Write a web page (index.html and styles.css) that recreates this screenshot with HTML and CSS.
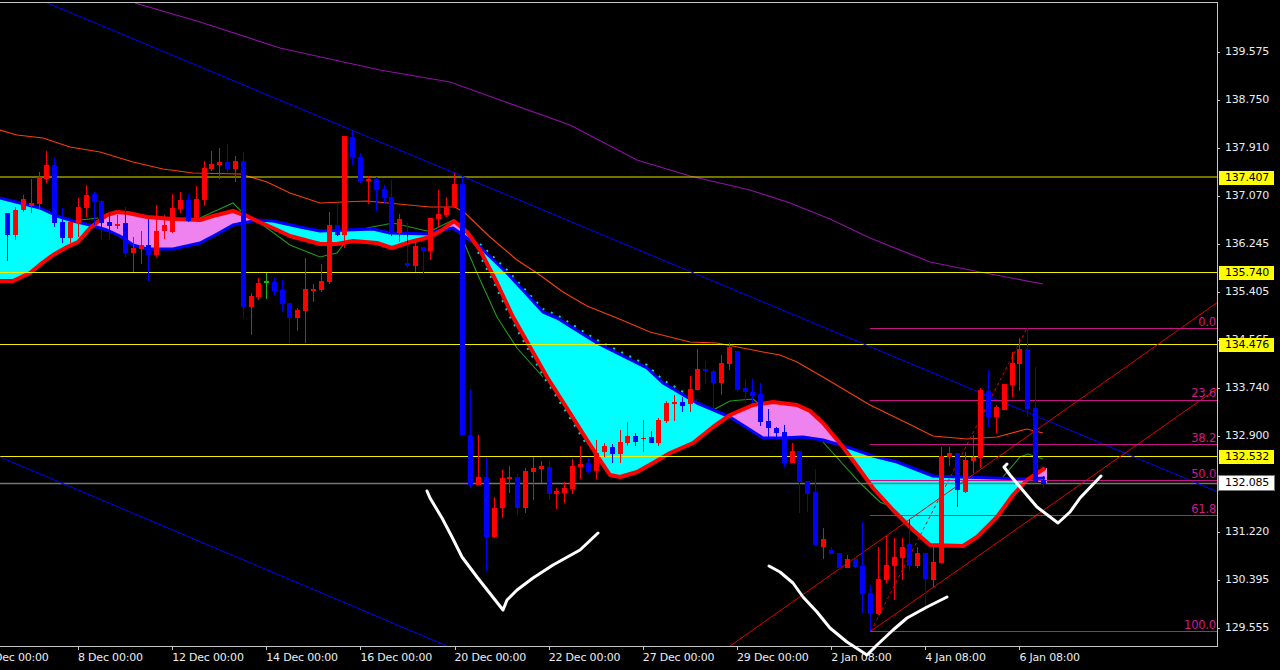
FILE: index.html
```html
<!DOCTYPE html>
<html lang="en">
<head>
<meta charset="utf-8">
<title>Chart</title>
<link rel="stylesheet" href="styles.css">
</head>
<body>
<main class="terminal">
  <div class="plot">
    <svg class="plot-svg" viewBox="0 3 1217 643" width="1217" height="643" aria-label="Candlestick chart">
      <defs>
        <path id="cloud" fill-rule="evenodd" d="M0 281L13 281L30 273L42 263L53 255L67 247L78 242L90 228L100 220L107 215L117 212L128 213L147 217L173 219L200 220L213 216L233 211L247 216L257 221L273 228L290 236L320 244L337 244L353 241L377 243L392 248L410 242L430 237L442 230L454 221L467 232L480 250L497 283L513 317L530 347L547 377L570 413L587 440L600 460L610 475L620 477L637 472L653 463L670 453L693 443L713 427L730 415L753 405L773 402L797 405L810 411L823 423L843 447L860 470L873 488L893 510L913 530L930 545L963 546L977 537L997 517L1013 495L1027 480L1047 468L1047 483L1036 481L1027 479L960 477L933 476L897 462L873 456L847 447L823 440L803 437L780 438L763 438L730 417L697 403L663 383L647 368L597 343L557 318L543 312L507 273L480 247L467 238L453 228L433 232L430 234L390 233L373 229L347 230L320 231L300 227L273 221L257 220L233 225L217 234L200 243L173 249L147 249L133 245L120 236L107 230L90 225L73 221L57 216L40 208L20 203L0 198Z"/>
        <clipPath id="pink-zones">
          <rect x="92" y="0" width="158" height="646"/>
          <rect x="438" y="0" width="24" height="646"/>
          <rect x="730" y="0" width="115" height="646"/>
          <rect x="1029" y="0" width="20" height="646"/>
        </clipPath>
      </defs>

      <path class="ma-green" d="M80 220L98 218M200 218L213 212L233 203L240 210L267 228L290 245L320 257L337 253L343 245L367 228L393 223L427 231L433 230L453 220L463 240L477 273L497 317L517 348L543 377M713 410L730 401L753 399L763 407M823 442L860 483L880 502L887 505M1003 477L1020 457L1028 454L1043 459"/>
      <use href="#cloud" class="cloud-cyan"/>
      <use href="#cloud" class="cloud-pink" clip-path="url(#pink-zones)"/>
      <path class="edge-dots" d="M480 244L507 270L543 309L557 315L597 340L647 365L663 380L697 400"/>
      <path class="edge-dots" d="M478 252L495 285L511 319L528 349L545 379L568 415L585 442"/>
      <path class="ma-orange" d="M0 130L17 135L43 138L70 147L100 152L133 162L163 169L193 173L240 174L267 182L290 193L320 203L367 201L430 207L455 207L465 213L490 237L517 260L537 273L563 292L587 306L617 318L650 332L690 342L717 343L763 352L780 355L797 362L823 377L870 405L907 423L933 436L967 439L997 437L1027 429L1043 433"/>
      <path class="ma-purple" d="M135 3L200 22L280 48L380 70L450 82L500 100L570 125L637 160L690 176L750 190L790 203L830 219L870 238L930 262L980 272L1043 284"/>
      <path class="band-blue" d="M0 198L20 203L40 208L57 216L73 221L90 225L107 230L120 236L133 245L147 249L173 249L200 243L217 234L233 225L257 220L273 221L300 227L320 231L347 230L373 229L390 233L430 234L433 232L453 228L467 238L480 247L507 273L543 312L557 318L597 343L647 368L663 383L697 403L730 417L763 438L780 438L803 437L823 440L847 447L873 456L897 462L933 476L960 477L1027 479L1045 478"/>
      <path class="band-red" d="M0 281L13 281L30 273L42 263L53 255L67 247L78 242L90 228L100 220L107 215L117 212L128 213L147 217L173 219L200 220L213 216L233 211L247 216L257 221L273 228L290 236L320 244L337 244L353 241L377 243L392 248L410 242L430 237L442 230L454 221L467 232L480 250L497 283L513 317L530 347L547 377L570 413L587 440L600 460L610 475L620 477L637 472L653 463L670 453L693 443L713 427L730 415L753 405L773 402L797 405L810 411L823 423L843 447L860 470L873 488L893 510L913 530L930 545L963 546L977 537L997 517L1013 495L1027 480L1045 468"/>

      <path class="level-soft" d="M0 177H1217"/>
      <path class="level" d="M0 272.5H1217M0 344.5H1217M0 456.5H1217"/>
      <path class="bid" d="M0 483.5H1217"/>
      <path class="channel-blue" d="M45 2L1218 492M0 457L447 646"/>
      <path class="channel-red" d="M730 646L1218 302M871 631L1218 388"/>
      <path class="fib-trend" d="M871 631L1027 328"/>
      <path class="fib" d="M870 328.5H1217M870 400.5H1217M870 444.5H1217M870 480.5H1217M870 515.5H1217M870 631.5H1217"/>
      <text class="fib-label" x="1216" y="326">0.0</text>
      <text class="fib-label" x="1216" y="397">23.6</text>
      <text class="fib-label" x="1216" y="442">38.2</text>
      <text class="fib-label" x="1216" y="478">50.0</text>
      <text class="fib-label" x="1216" y="513">61.8</text>
      <text class="fib-label" x="1216" y="629">100.0</text>

      <path class="wick-blue" d="M7.5 213V261M54.5 158V227M62.5 208V243M94.5 192V225M101.5 200V240M109.5 213V240M125.5 207V257M148.5 219V281M188.5 194V222M227.5 144V172M243.5 152V318M274.5 278V295M282.5 280V312M289.5 303V343M337.5 204V236M352.5 131V165M360.5 153V183M376.5 177V211M384.5 185V203M391.5 180V236M407.5 223V268M423.5 247V273M462.5 177V435M470.5 390V488M486.5 457V571M517.5 474V515M549.5 461V500M588.5 458V473M612.5 444V463M635.5 433V446M651.5 431V443M682.5 397V412M705.5 361V384M713.5 369V408M737.5 351V392M745.5 379V403M752.5 379V403M760.5 383V426M768.5 409V437M776.5 427V437M784.5 425V467M799.5 451V513M807.5 481V512M815.5 469V545M831.5 547V554M839.5 553V568M855.5 557V568M862.5 522V614M870.5 585V631M909.5 519V570M925.5 553V608M957.5 453V507M988.5 370V427M1027.5 328V417M1035.5 367V483M1043.5 476V488"/>
      <path class="body-blue" d="M7.5 213V235M54.5 165V223M62.5 222V238M94.5 194V202M101.5 201V223M109.5 222V226M125.5 223V253M148.5 245V255M188.5 200V221M227.5 162V169M243.5 161V307M274.5 282V291M282.5 290V304M289.5 303V318M337.5 225V235M352.5 137V158M360.5 157V181M376.5 179V190M384.5 189V198M391.5 197V234M407.5 263V266M423.5 247V251M462.5 184V435M470.5 435V485M486.5 477V537M517.5 477V508M549.5 467V494M588.5 463V472M612.5 447V454M635.5 436V442M651.5 437V443M682.5 402V406M705.5 369V371M713.5 371V383M737.5 351V390M745.5 388V392M752.5 392V396M760.5 394V422M768.5 421V428M776.5 428V433M784.5 432V463M799.5 451V482M807.5 481V494M815.5 492V545M831.5 550V554M839.5 553V568M855.5 559V567M862.5 566V594M870.5 593V614M909.5 544V566M925.5 553V579M957.5 453V490M988.5 391V417M1027.5 349V409M1035.5 408V482M1043.5 480V484"/>
      <path class="wick-red" d="M15.5 207V240M23.5 195V212M31.5 179V213M39.5 172V209M46.5 151V183M70.5 222V243M78.5 198V237M86.5 185V217M117.5 215V229M133.5 237V272M141.5 231V264M156.5 205V257M164.5 215V239M172.5 194V233M180.5 192V213M196.5 186V220M204.5 161V206M211.5 151V171M219.5 148V179M235.5 156V182M251.5 293V335M258.5 278V300M297.5 308V331M305.5 258V343M313.5 284V302M321.5 264V292M329.5 212V284M344.5 136V248M368.5 176V204M399.5 214V242M415.5 240V272M430.5 218V260M438.5 190V228M446.5 197V217M454.5 173V208M478.5 435V485M494.5 497V538M502.5 470V518M509.5 466V493M525.5 468V513M533.5 457V500M541.5 461V483M556.5 488V509M564.5 482V503M572.5 459V494M580.5 446V479M596.5 440V479M604.5 443V457M620.5 430V463M627.5 422V446M643.5 420V452M658.5 418V446M666.5 401V423M674.5 395V421M690.5 376V412M697.5 349V390M721.5 355V395M729.5 343V370M792.5 443V463M823.5 528V559M847.5 555V568M878.5 547V615M886.5 535V583M894.5 538V600M902.5 538V580M917.5 547V568M933.5 547V587M941.5 447V563M949.5 447V466M965.5 452V493M973.5 435V473M980.5 388V468M996.5 405V433M1004.5 384V410M1012.5 352V397M1019.5 338V391"/>
      <path class="body-red" d="M15.5 210V235M23.5 199V210M31.5 203V206M39.5 177V204M46.5 165V179M70.5 222V238M78.5 207V223M86.5 195V208M117.5 224V226M133.5 248V253M141.5 245V249M156.5 231V255M164.5 225V231M172.5 208V232M180.5 200V209M196.5 199V220M204.5 168V200M211.5 164V169M219.5 162V165M235.5 161V169M251.5 296V307M258.5 283V297M297.5 310V318M305.5 289V311M313.5 289V291M321.5 281V290M329.5 225V282M344.5 136V235M368.5 179V181M399.5 219V233M415.5 246V266M430.5 218V251M438.5 214V219M446.5 207V215M454.5 184V207M478.5 477V485M494.5 508V537M502.5 478V508M509.5 477V479M525.5 471V508M533.5 468V472M541.5 466V469M556.5 491V494M564.5 488V493M572.5 466V489M580.5 464V467M596.5 453V471M604.5 446V452M620.5 442V454M627.5 436V443M643.5 438V439M658.5 420V443M666.5 403V421M674.5 402V404M690.5 389V404M697.5 369V390M721.5 363V383M729.5 347V364M792.5 451V463M823.5 539V547M847.5 559V568M878.5 579V614M886.5 565V580M894.5 557V566M902.5 547V558M917.5 553V566M933.5 562V580M941.5 456V563M949.5 453V457M965.5 460V492M973.5 457V461M980.5 390V458M996.5 407V417M1004.5 384V410M1012.5 363V385M1019.5 349V364"/>
      <path class="wick-green" d="M266.5 273V299"/>
      <path class="body-green" d="M266.5 281V283"/>
    </svg>
  </div>

  <aside class="price-scale">
    <div class="price-tick">139.575</div>
    <div class="price-tick">138.750</div>
    <div class="price-tick">137.910</div>
    <div class="price-tick">137.070</div>
    <div class="price-tick">136.245</div>
    <div class="price-tick">135.405</div>
    <div class="price-tick">134.565</div>
    <div class="price-tick">133.740</div>
    <div class="price-tick">132.900</div>
    <div class="price-tick">132.060</div>
    <div class="price-tick">131.220</div>
    <div class="price-tick">130.395</div>
    <div class="price-tick">129.555</div>
    <span class="badge badge-a">137.407</span>
    <span class="badge badge-b">135.740</span>
    <span class="badge badge-c">134.476</span>
    <span class="badge badge-d">132.532</span>
    <span class="badge badge-bid">132.085</span>
  </aside>

  <footer class="time-scale">
    <span class="time-tick time-first">6 Dec 00:00</span>
    <span class="time-tick">8 Dec 00:00</span>
    <span class="time-tick">12 Dec 00:00</span>
    <span class="time-tick">14 Dec 00:00</span>
    <span class="time-tick">16 Dec 00:00</span>
    <span class="time-tick">20 Dec 00:00</span>
    <span class="time-tick">22 Dec 00:00</span>
    <span class="time-tick">27 Dec 00:00</span>
    <span class="time-tick">29 Dec 00:00</span>
    <span class="time-tick">2 Jan 08:00</span>
    <span class="time-tick">4 Jan 08:00</span>
    <span class="time-tick">6 Jan 08:00</span>
  </footer>

  <svg class="scribbles" viewBox="0 0 1280 670" width="1280" height="670" aria-hidden="true">
    <path d="M427 491L430 498L442 518L452 537L462 557L477 577L503 610L507 600L517 590L533 578L553 565L580 550L598 533"/>
    <path d="M769 566L780 572L793 583L803 597L817 612L830 628L847 642L867 655L877 645L893 630L907 618L927 607L947 597"/>
    <path d="M1007 464L1004 467L1010 475L1020 487L1037 507L1058 523L1070 512L1080 498L1101 476"/>
  </svg>
</main>
</body>
</html>
```
FILE: styles.css
```css
* { box-sizing: border-box; }
html, body { margin: 0; padding: 0; background: #000; }
body { width: 1280px; height: 670px; overflow: hidden; }

.terminal {
  position: relative;
  display: grid;
  grid-template-columns: 1217px 63px;
  grid-template-rows: 644px 24px;
  width: 1280px;
  height: 670px;
  padding-top: 2px;
  background: #000;
  font-family: "DejaVu Sans", Verdana, sans-serif;
  font-size: 11px;
  letter-spacing: -0.2px;
  color: #e9edf0;
}

.plot { border-top: 1px solid #c4c4c4; overflow: hidden; }
.plot-svg { display: block; }
.plot-svg > path { fill: none; }

.cloud-cyan { fill: #00ffff; }
.cloud-pink { fill: #ee82ee; }
.edge-dots { stroke: #00d8d8; stroke-width: 2; stroke-dasharray: 2 7; }
.ma-green { stroke: #1f9a1f; stroke-width: 1.1; }
.ma-orange { stroke: #f0400c; stroke-width: 1.2; }
.ma-purple { stroke: #8f10a5; stroke-width: 1.2; }
.band-blue { stroke: #0000ff; stroke-width: 3; stroke-linejoin: round; }
.band-red { stroke: #ff0000; stroke-width: 4; stroke-linejoin: round; }
.level { stroke: #f0f000; stroke-width: 1; shape-rendering: crispEdges; }
.level-soft { stroke: #e6e600; stroke-width: 1; }
.bid { stroke: #757575; stroke-width: 1.5; }
.channel-blue { stroke: #0000ff; stroke-width: 1; }
.channel-red { stroke: #e00000; stroke-width: 1; }
.fib-trend { stroke: #e00000; stroke-width: 1; stroke-dasharray: 3 3; }
.fib { stroke: #c71585; stroke-width: 1; shape-rendering: crispEdges; }
.fib-label { fill: #d01a8c; font-size: 11.5px; text-anchor: end; }

.wick-blue { stroke: #0000ff; stroke-width: 1; shape-rendering: crispEdges; }
.body-blue { stroke: #0000ff; stroke-width: 5; shape-rendering: crispEdges; }
.wick-red { stroke: #ff0000; stroke-width: 1; shape-rendering: crispEdges; }
.body-red { stroke: #ff0000; stroke-width: 5; shape-rendering: crispEdges; }
.wick-green { stroke: #20b020; stroke-width: 1; shape-rendering: crispEdges; }
.body-green { stroke: #20b020; stroke-width: 5; shape-rendering: crispEdges; }

.price-scale {
  position: relative;
  grid-row: 1 / span 2;
  grid-column: 2;
  display: flex;
  flex-direction: column;
  height: 644px;
  padding-top: 26px;
  border-left: 1px solid #c4c4c4;
}
.price-tick {
  display: flex;
  align-items: center;
  gap: 5px;
  flex: 0 0 48.04px;
  line-height: 14px;
}
.price-tick::before {
  content: "";
  width: 2px;
  height: 1px;
  background: #c4c4c4;
}

.badge {
  position: absolute;
  left: 1px;
  width: 55px;
  height: 14px;
  padding-left: 6px;
  background: #ffff00;
  color: #000;
  line-height: 14px;
}
.badge-a { top: 169px; }
.badge-b { top: 264px; }
.badge-c { top: 336px; }
.badge-d { top: 448px; }
.badge-bid { top: 474px; background: #fff; outline: 1px solid #777; }

.time-scale {
  display: flex;
  grid-column: 1;
  grid-row: 2;
  width: 1218px;
  height: 24px;
  border-top: 1px solid #c4c4c4;
  overflow: hidden;
}
.time-tick {
  position: relative;
  flex: 0 0 94.15px;
  padding-top: 4px;
  line-height: 14px;
  white-space: nowrap;
}
.time-tick::before {
  content: "";
  position: absolute;
  left: 0;
  top: 0;
  width: 1px;
  height: 3px;
  background: #c4c4c4;
}
.time-first { margin-left: -16.15px; }

.scribbles {
  position: absolute;
  left: 0;
  top: 0;
  pointer-events: none;
}
.scribbles path {
  fill: none;
  stroke: #fff;
  stroke-width: 3;
  stroke-linecap: round;
  stroke-linejoin: round;
}
```
